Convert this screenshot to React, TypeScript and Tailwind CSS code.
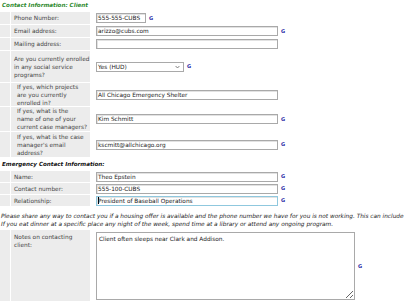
import type { ReactNode } from 'react'

function G() {
  return <span className="ml-[3px] text-[5px] leading-none font-bold text-[#2b2ba6]">G</span>
}

function Field({ value, w = 'w-[182px]', focus = false }: { value?: string; w?: string; focus?: boolean }) {
  return (
    <div
      className={`flex h-[10px] items-center bg-white pl-[1px] text-[#222] shadow-[inset_1px_1px_0_#e2e2e2] border ${
        focus ? 'border-[#8fc8de]' : 'border-[#a9a9a9]'
      } ${w}`}
    >
      {focus && <span className="mr-[-1px] inline-block h-[7px] w-px bg-black" />}
      <span className="whitespace-nowrap">{value}</span>
    </div>
  )
}

function Row({
  h,
  label,
  indent = false,
  top = false,
  children,
}: {
  h: string
  label: ReactNode
  indent?: boolean
  top?: boolean
  children?: ReactNode
}) {
  return (
    <div className={`flex gap-px ${h}`}>
      <div className="w-[10px] shrink-0 bg-[#ececec]" />
      <div
        className={`flex w-[79px] shrink-0 bg-[#ececec] pr-[1px] ${indent ? 'pl-[6px]' : 'pl-[3px]'} ${
          top ? 'items-start pt-[3px]' : 'items-center'
        }`}
      >
        <div className="whitespace-nowrap text-[#444]">{label}</div>
      </div>
      <div className="flex flex-1 items-center pl-[5px]">{children}</div>
    </div>
  )
}

export default function App() {
  return (
    <div className="h-[301px] w-[409px] overflow-hidden bg-white font-['DejaVu_Sans',Verdana,sans-serif] text-[5.8px] leading-[8px]">
      <div className="flex h-[12px] items-start pl-[2px] pt-px text-[5.6px] font-bold italic text-[#2f8a2f]">
        Contact Information: Client
      </div>

      <div className="flex flex-col gap-px">
        <Row h="h-[12px]" label="Phone Number:">
          <Field value="555-555-CUBS" w="w-[50px]" />
          <G />
        </Row>
        <Row h="h-[12px]" label="Email address:">
          <Field value="arizzo@cubs.com" />
          <G />
        </Row>
        <Row h="h-[12px]" label="Mailing address:">
          <Field />
        </Row>
        <Row
          h="h-[31px]"
          label={
            <>
              Are you currently enrolled
              <br />
              in any social service
              <br />
              programs?
            </>
          }
        >
          <div className="flex h-[10px] w-[88px] items-center justify-between border border-[#a9a9a9] bg-white pl-[1px] pr-[3px] text-[#222]">
            <span>Yes (HUD)</span>
            <svg width="5" height="4" viewBox="0 0 5 4" fill="none">
              <path d="M0.6 1 L2.5 3 L4.4 1" stroke="#666" strokeWidth="0.8" />
            </svg>
          </div>
          <G />
        </Row>
        <Row
          h="h-[23px]"
          indent
          label={
            <>
              If yes, which projects
              <br />
              are you currently
              <br />
              enrolled in?
            </>
          }
        >
          <Field value="All Chicago Emergency Shelter" />
        </Row>
        <Row
          h="h-[24px]"
          indent
          label={
            <>
              If yes, what is the
              <br />
              name of one of your
              <br />
              current case managers?
            </>
          }
        >
          <Field value="Kim Schmitt" />
          <G />
        </Row>
        <Row
          h="h-[25px]"
          indent
          label={
            <>
              If yes, what is the case
              <br />
              manager's email
              <br />
              address?
            </>
          }
        >
          <Field value="kscmitt@allchicago.org" />
          <G />
        </Row>
      </div>

      <div className="flex h-[14px] items-center pl-[2px] text-[5.6px] font-bold italic text-[#111]">
        Emergency Contact Information:
      </div>

      <div className="flex flex-col gap-px">
        <Row h="h-[11px]" label="Name:">
          <Field value="Theo Epstein" />
          <G />
        </Row>
        <Row h="h-[11px]" label="Contact number:">
          <Field value="555-100-CUBS" />
          <G />
        </Row>
        <Row h="h-[11px]" label="Relationship:">
          <Field value="President of Baseball Operations" focus />
          <G />
        </Row>
      </div>

      <p className="mt-[7px] mb-[2px] whitespace-nowrap pl-[1px] italic leading-[7.5px] text-[#222]">
        Please share any way to contact you if a housing offer is available and the phone number we have for you is not
        working. This can include
        <br />
        If you eat dinner at a specific place any night of the week, spend time at a library or attend any ongoing
        program.
      </p>

      <Row
        h="h-[72px]"
        top
        label={
          <>
            Notes on contacting
            <br />
            client:
          </>
        }
      >
        <textarea
          readOnly
          defaultValue="Client often sleeps near Clark and Addison."
          className="h-[68px] w-[259px] resize border border-[#a9a9a9] bg-white px-[2px] pt-[2px] text-[#222] outline-none"
        />
        <G />
      </Row>
    </div>
  )
}
